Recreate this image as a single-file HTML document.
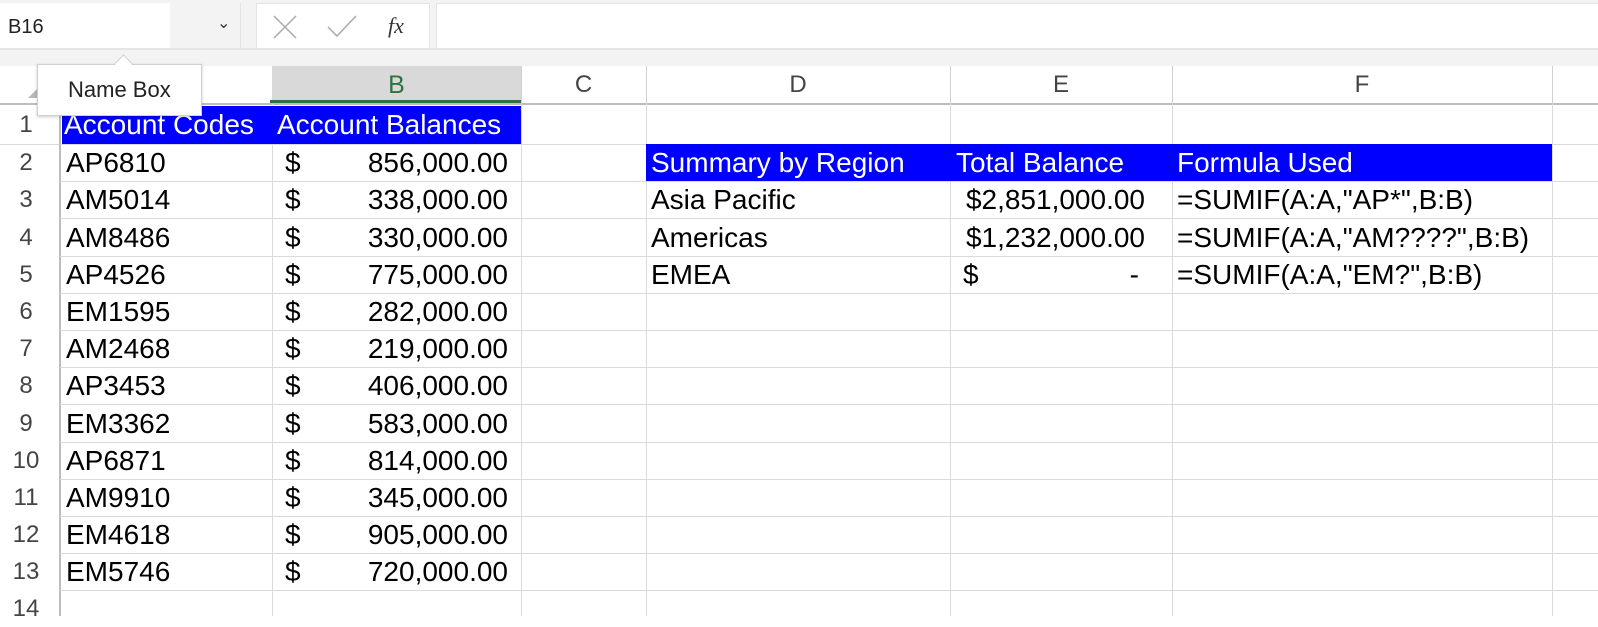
<!DOCTYPE html>
<html><head><style>
body{margin:0;width:1598px;height:616px;overflow:hidden;background:#fff;font-family:"Liberation Sans",Arial,sans-serif;position:relative}
.a{position:absolute}
.t{position:absolute;font-size:28px;color:#000;line-height:37px;white-space:nowrap}
.hl{position:absolute;height:1px;background:#dadada;left:60px;width:1538px}
.vl{position:absolute;width:1px;background:#dadada;top:104px;height:512px}
.rn{position:absolute;left:0;width:52px;text-align:center;font-size:24px;color:#444;line-height:37px}
.ch{position:absolute;top:66px;height:38px;line-height:38px;text-align:center;font-size:24px;color:#444}
</style></head><body>
<div class="a" style="left:0;top:0;width:1598px;height:66px;background:#f3f3f3"></div>
<div class="a" style="left:0;top:3px;width:240px;height:45px;background:#fff;border-right:1px solid #e3e3e3;border-bottom:1px solid #e3e3e3"></div>
<div class="a" style="left:170px;top:3px;width:70px;height:45px;background:#f3f3f3"></div>
<div class="a" style="left:8px;top:16px;font-size:20px;color:#222">B16</div>
<div class="a" style="left:217px;top:13px;font-size:16px;color:#333">&#x2304;</div>
<div class="a" style="left:256px;top:3px;width:172px;height:44px;background:#fff;border:1px solid #e3e3e3"></div>
<svg class="a" style="left:270px;top:12px" width="140" height="28"><path d="M4 4L26 26M26 4L4 26" stroke="#aaa" stroke-width="1.5" fill="none"/><path d="M58 15L67 24L86 4" stroke="#aaa" stroke-width="1.5" fill="none"/><text x="118" y="21" font-family="Liberation Serif" font-style="italic" font-size="22" fill="#333">fx</text></svg>
<div class="a" style="left:436px;top:3px;width:1162px;height:44px;background:#fff;border:1px solid #e3e3e3;border-right:none"></div>
<div class="a" style="left:0;top:48px;width:1598px;height:2px;background:#e6e6e6"></div>
<div class="a" style="left:0;top:103px;width:1598px;height:2px;background:#bdbdbd"></div>
<div class="a" style="left:59px;top:66px;width:2px;height:550px;background:#bdbdbd"></div>
<div class="a" style="left:272px;top:66px;width:249px;height:37px;background:#d9d9d9"></div>
<div class="a" style="left:270px;top:100px;width:252px;height:3px;background:#2e7340"></div>
<svg class="a" style="left:20px;top:78px" width="40" height="24"><path d="M26 2L26 20L8 20Z" fill="#b8b8b8"/></svg>
<div class="ch" style="left:272px;width:249px;color:#2e7340;font-size:25px">B</div>
<div class="ch" style="left:521px;width:125px">C</div>
<div class="ch" style="left:646px;width:304px">D</div>
<div class="ch" style="left:950px;width:222px">E</div>
<div class="ch" style="left:1172px;width:380px">F</div>
<div class="a" style="left:521px;top:66px;width:1px;height:38px;background:#d0d0d0"></div>
<div class="a" style="left:646px;top:66px;width:1px;height:38px;background:#d0d0d0"></div>
<div class="a" style="left:950px;top:66px;width:1px;height:38px;background:#d0d0d0"></div>
<div class="a" style="left:1172px;top:66px;width:1px;height:38px;background:#d0d0d0"></div>
<div class="a" style="left:1552px;top:66px;width:1px;height:38px;background:#d0d0d0"></div>
<div class="hl" style="top:144px"></div><div class="hl" style="top:181px"></div><div class="hl" style="top:218px"></div><div class="hl" style="top:256px"></div><div class="hl" style="top:293px"></div><div class="hl" style="top:330px"></div><div class="hl" style="top:367px"></div><div class="hl" style="top:404px"></div><div class="hl" style="top:442px"></div><div class="hl" style="top:479px"></div><div class="hl" style="top:516px"></div><div class="hl" style="top:553px"></div><div class="hl" style="top:590px"></div>
<div class="a" style="left:0;top:144px;width:59px;height:1px;background:#dadada"></div>
<div class="vl" style="left:272px"></div><div class="vl" style="left:521px"></div><div class="vl" style="left:646px"></div><div class="vl" style="left:950px"></div><div class="vl" style="left:1172px"></div><div class="vl" style="left:1552px"></div>
<div class="a" style="left:62px;top:106px;width:459px;height:38px;background:#0000ff"></div>
<div class="a" style="left:646px;top:144px;width:906px;height:37px;background:#0000ff"></div>
<div class="rn" style="top:106px">1</div><div class="rn" style="top:144px">2</div><div class="rn" style="top:181px">3</div><div class="rn" style="top:219px">4</div><div class="rn" style="top:256px">5</div><div class="rn" style="top:293px">6</div><div class="rn" style="top:330px">7</div><div class="rn" style="top:367px">8</div><div class="rn" style="top:405px">9</div><div class="rn" style="top:442px">10</div><div class="rn" style="top:479px">11</div><div class="rn" style="top:516px">12</div><div class="rn" style="top:553px">13</div><div class="rn" style="top:590px">14</div>
<div class="t" style="left:64px;top:106px;color:#fff">Account Codes</div>
<div class="t" style="left:277px;top:106px;color:#fff">Account Balances</div>
<div class="t" style="left:66px;top:144px">AP6810</div><div class="t" style="left:66px;top:181px">AM5014</div><div class="t" style="left:66px;top:219px">AM8486</div><div class="t" style="left:66px;top:256px">AP4526</div><div class="t" style="left:66px;top:293px">EM1595</div><div class="t" style="left:66px;top:330px">AM2468</div><div class="t" style="left:66px;top:367px">AP3453</div><div class="t" style="left:66px;top:405px">EM3362</div><div class="t" style="left:66px;top:442px">AP6871</div><div class="t" style="left:66px;top:479px">AM9910</div><div class="t" style="left:66px;top:516px">EM4618</div><div class="t" style="left:66px;top:553px">EM5746</div>
<div class="t" style="left:285px;top:144px">$</div><div class="t" style="left:285px;top:181px">$</div><div class="t" style="left:285px;top:219px">$</div><div class="t" style="left:285px;top:256px">$</div><div class="t" style="left:285px;top:293px">$</div><div class="t" style="left:285px;top:330px">$</div><div class="t" style="left:285px;top:367px">$</div><div class="t" style="left:285px;top:405px">$</div><div class="t" style="left:285px;top:442px">$</div><div class="t" style="left:285px;top:479px">$</div><div class="t" style="left:285px;top:516px">$</div><div class="t" style="left:285px;top:553px">$</div>
<div class="t" style="right:1090px;top:144px">856,000.00</div><div class="t" style="right:1090px;top:181px">338,000.00</div><div class="t" style="right:1090px;top:219px">330,000.00</div><div class="t" style="right:1090px;top:256px">775,000.00</div><div class="t" style="right:1090px;top:293px">282,000.00</div><div class="t" style="right:1090px;top:330px">219,000.00</div><div class="t" style="right:1090px;top:367px">406,000.00</div><div class="t" style="right:1090px;top:405px">583,000.00</div><div class="t" style="right:1090px;top:442px">814,000.00</div><div class="t" style="right:1090px;top:479px">345,000.00</div><div class="t" style="right:1090px;top:516px">905,000.00</div><div class="t" style="right:1090px;top:553px">720,000.00</div>
<div class="t" style="left:651px;top:144px;color:#fff">Summary by Region</div>
<div class="t" style="left:956px;top:144px;color:#fff">Total Balance</div>
<div class="t" style="left:1177px;top:144px;color:#fff">Formula Used</div>
<div class="t" style="left:651px;top:181px">Asia Pacific</div><div class="t" style="left:651px;top:219px">Americas</div><div class="t" style="left:651px;top:256px">EMEA</div>
<div class="t" style="right:453px;top:181px">$2,851,000.00</div><div class="t" style="right:453px;top:219px">$1,232,000.00</div>
<div class="t" style="left:963px;top:256px">$</div><div class="t" style="right:459px;top:256px">-</div>
<div class="t" style="left:1177px;top:181px">=SUMIF(A:A,"AP*",B:B)</div>
<div class="t" style="left:1177px;top:219px">=SUMIF(A:A,"AM????",B:B)</div>
<div class="t" style="left:1177px;top:256px">=SUMIF(A:A,"EM?",B:B)</div>
<div class="a" style="left:37px;top:64px;width:163px;height:50px;background:#fff;border:1px solid #d0d0d0;box-shadow:0 1px 3px rgba(0,0,0,.2)"></div>
<div class="a" style="left:117px;top:57px;width:12px;height:12px;background:#fff;border-left:1px solid #d0d0d0;border-top:1px solid #d0d0d0;transform:rotate(45deg)"></div>
<div class="a" style="left:68px;top:77px;font-size:22px;color:#222">Name Box</div>
</body></html>
